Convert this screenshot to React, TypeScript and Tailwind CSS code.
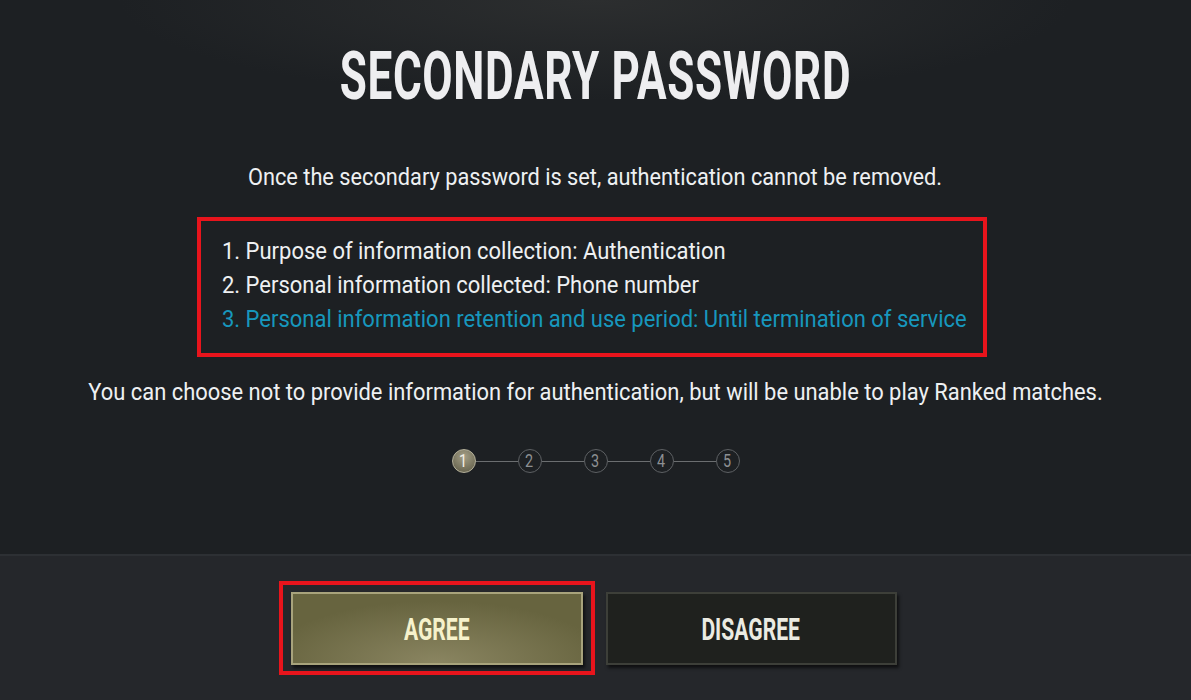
import React from "react";

const roboto = { fontFamily: '"Roboto", "Liberation Sans", sans-serif' };

function Stepper() {
  const steps = [1, 2, 3, 4, 5];
  return (
    <div className="flex items-center">
      {steps.map((n, i) => (
        <React.Fragment key={n}>
          {i > 0 && <div className="h-px w-[42px] bg-[#6b6e70]" />}
          <div
            className={
              n === 1
                ? "flex h-[24px] w-[24px] items-center justify-center rounded-full border border-[#b4b09a] bg-[radial-gradient(circle_at_50%_30%,#a49f86,#5c5945)] text-[#f2f0e6]"
                : "flex h-[24px] w-[24px] items-center justify-center rounded-full border border-[#5d6063] text-[#8d9093]"
            }
          >
            <span className="scale-x-[0.8] text-[18px] leading-none">{n}</span>
          </div>
        </React.Fragment>
      ))}
    </div>
  );
}

export default function App() {
  return (
    <div className="flex h-[700px] w-full flex-col overflow-hidden bg-[#1d2023]" style={roboto}>
      <div className="flex h-[554px] flex-col items-center bg-[radial-gradient(ellipse_40%_18%_at_50%_0%,#2c2e2f,#1d2023)]">
        <h1 className="mt-[44px] scale-x-[0.667] whitespace-nowrap text-[66px] leading-none font-bold tracking-[1px] text-[#eeeef0]">
          SECONDARY PASSWORD
        </h1>
        <p className="mt-[55px] scale-x-[0.906] whitespace-nowrap text-[24px] leading-none text-[#eef0f2]">
          Once the secondary password is set, authentication cannot be removed.
        </p>
        <div className="mt-[28px] mr-[7px] flex w-[790px] flex-col gap-[10px] border-[4px] border-[#e8141c] px-[21px] pt-[18px] pb-[22px] text-[24px] leading-[24px]">
          <div className="origin-left scale-x-[0.916] whitespace-nowrap text-[#eef0f2]">
            1. Purpose of information collection: Authentication
          </div>
          <div className="origin-left scale-x-[0.916] whitespace-nowrap text-[#eef0f2]">
            2. Personal information collected: Phone number
          </div>
          <div className="origin-left scale-x-[0.916] whitespace-nowrap text-[#1797bd]">
            3. Personal information retention and use period: Until termination of service
          </div>
        </div>
        <p className="mt-[23px] scale-x-[0.913] whitespace-nowrap text-[24px] leading-none text-[#eef0f2]">
          You can choose not to provide information for authentication, but will be unable to play Ranked matches.
        </p>
        <div className="mt-[45px]">
          <Stepper />
        </div>
      </div>
      <div className="flex flex-1 items-start justify-center border-t-2 border-[#2d3034] bg-[#25272b] pt-[36px]">
        <div className="mr-[4px] flex items-start gap-[23px]">
          <div className="relative">
            <button className="flex h-[73px] w-[292px] items-center justify-center border-2 border-[#a8a37c] bg-[radial-gradient(ellipse_60%_90%_at_50%_100%,#8a8561,#67643f)] shadow-[2px_3px_3px_rgba(0,0,0,0.6)]">
              <span className="scale-x-[0.66] text-[32px] font-bold text-[#f6f2cc]">AGREE</span>
            </button>
            <div className="pointer-events-none absolute -top-[11px] -right-[12px] -bottom-[10px] -left-[12px] border-[4px] border-[#e8141c]" />
          </div>
          <button className="flex h-[73px] w-[291px] items-center justify-center border-2 border-[#3d3f39] bg-[#1f211e] shadow-[2px_3px_3px_rgba(0,0,0,0.6)]">
            <span className="scale-x-[0.66] text-[32px] font-bold text-[#ebebe2]">DISAGREE</span>
          </button>
        </div>
      </div>
    </div>
  );
}
